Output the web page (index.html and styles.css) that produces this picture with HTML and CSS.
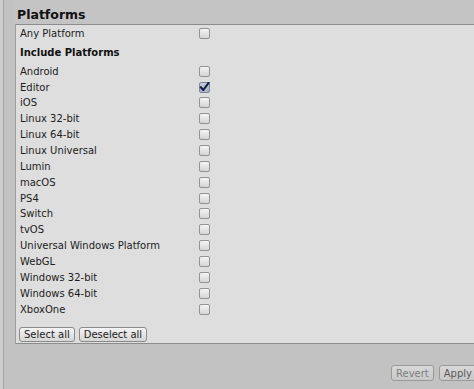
FILE: index.html
```html
<!DOCTYPE html>
<html lang="en">
  <head>
    <meta charset="UTF-8" />
    <meta name="viewport" content="width=device-width, initial-scale=1.0" />
    <title>Platforms</title>
    <link rel="stylesheet" href="styles.css">
  </head>
  <body>
    <div class="app">
      <div class="edge"></div>
      <div class="main">
        <div class="section-title">Platforms</div>
        <div class="panel">
          <div class="row any">
            <span class="label">Any Platform</span>
            <span class="check"></span>
          </div>
          <div class="row group">Include Platforms</div>
          <div class="list">
            <div class="row"><span class="label">Android</span><span class="check"></span></div>
            <div class="row">
              <span class="label">Editor</span>
              <span class="check checked">
                <svg width="11" height="11" viewBox="0 0 11 11"><path d="M1.8 5.2 L4.3 8 L9.6 0.8" fill="none" stroke="#0f1f45" stroke-width="2.1" stroke-linecap="round" stroke-linejoin="round"/></svg>
              </span>
            </div>
            <div class="row"><span class="label">iOS</span><span class="check"></span></div>
            <div class="row"><span class="label">Linux 32-bit</span><span class="check"></span></div>
            <div class="row"><span class="label">Linux 64-bit</span><span class="check"></span></div>
            <div class="row"><span class="label">Linux Universal</span><span class="check"></span></div>
            <div class="row"><span class="label">Lumin</span><span class="check"></span></div>
            <div class="row"><span class="label">macOS</span><span class="check"></span></div>
            <div class="row"><span class="label">PS4</span><span class="check"></span></div>
            <div class="row"><span class="label">Switch</span><span class="check"></span></div>
            <div class="row"><span class="label">tvOS</span><span class="check"></span></div>
            <div class="row"><span class="label">Universal Windows Platform</span><span class="check"></span></div>
            <div class="row"><span class="label">WebGL</span><span class="check"></span></div>
            <div class="row"><span class="label">Windows 32-bit</span><span class="check"></span></div>
            <div class="row"><span class="label">Windows 64-bit</span><span class="check"></span></div>
            <div class="row"><span class="label">XboxOne</span><span class="check"></span></div>
          </div>
          <div class="actions">
            <button class="btn">Select all</button>
            <button class="btn">Deselect all</button>
          </div>
        </div>
        <div class="footer">
          <button class="btn disabled">Revert</button>
          <button class="btn apply">Apply</button>
        </div>
      </div>
    </div>
  </body>
</html>
```

FILE: styles.css
```css
:root {
  --bg-color: #c2c2c2;
  --panel-color: #dedede;
  --line-color: #8c8c8c;
  --text-color: #1c1c1c;
  --font-family: "DejaVu Sans", "Liberation Sans", sans-serif;
}
* {
  margin: 0;
  padding: 0;
  box-sizing: border-box;
}
body {
  width: 474px;
  height: 389px;
  overflow: hidden;
  background-color: var(--bg-color);
  font-family: var(--font-family);
  font-size: 10px;
  color: var(--text-color);
}
.app {
  display: flex;
  height: 389px;
}
.edge {
  width: 4px;
  background-color: #cecece;
  border-right: 1px solid #a2a2a2;
}
.main {
  flex: 1;
  display: flex;
  flex-direction: column;
  padding-left: 11px;
  min-width: 0;
}
.section-title {
  height: 24px;
  line-height: 29px;
  padding-left: 2px;
  font-size: 12.5px;
  font-weight: bold;
  color: #111;
  background-color: #c4c4c4;
}
.panel {
  height: 320px;
  background-color: var(--panel-color);
  border-top: 1px solid var(--line-color);
  border-left: 1px solid #9c9c9c;
  border-bottom: 1px solid var(--line-color);
  padding-left: 4px;
}
.row {
  display: flex;
  align-items: center;
  height: 15.87px;
}
.any {
  margin-top: 1px;
}
.group {
  margin-top: 3px;
  font-weight: bold;
  color: #111;
}
.list {
  margin-top: 2.5px;
}
.label {
  width: 179px;
}
.check {
  display: block;
  width: 11px;
  height: 11px;
  border: 1px solid #939393;
  border-radius: 2px;
  background: linear-gradient(#f4f4f4, #d4d4d4);
}
.check.checked {
  position: relative;
  background: linear-gradient(#c6ccd8, #a9b2c4);
  border-color: #7e8696;
}
.check svg {
  position: absolute;
  left: -1px;
  top: -1px;
}
.actions {
  display: flex;
  gap: 4px;
  margin-top: 10px;
  margin-left: -1px;
}
.btn {
  height: 15px;
  padding: 0 4px;
  border: 1px solid #8a8a8a;
  border-radius: 3px;
  background: linear-gradient(#f4f4f4, #d6d6d6);
  font-family: var(--font-family);
  font-size: 10px;
  line-height: 13px;
  color: #1c1c1c;
}
.footer {
  display: flex;
  justify-content: flex-end;
  gap: 5px;
  padding-top: 21px;
  margin-right: -3px;
}
.footer .btn {
  height: 16px;
  background: linear-gradient(#d8d8d8, #c8c8c8);
  border-color: #9a9a9a;
}
.btn.disabled {
  color: #7e7e7e;
}
.btn.apply {
  color: #5a5a5a;
}
```
